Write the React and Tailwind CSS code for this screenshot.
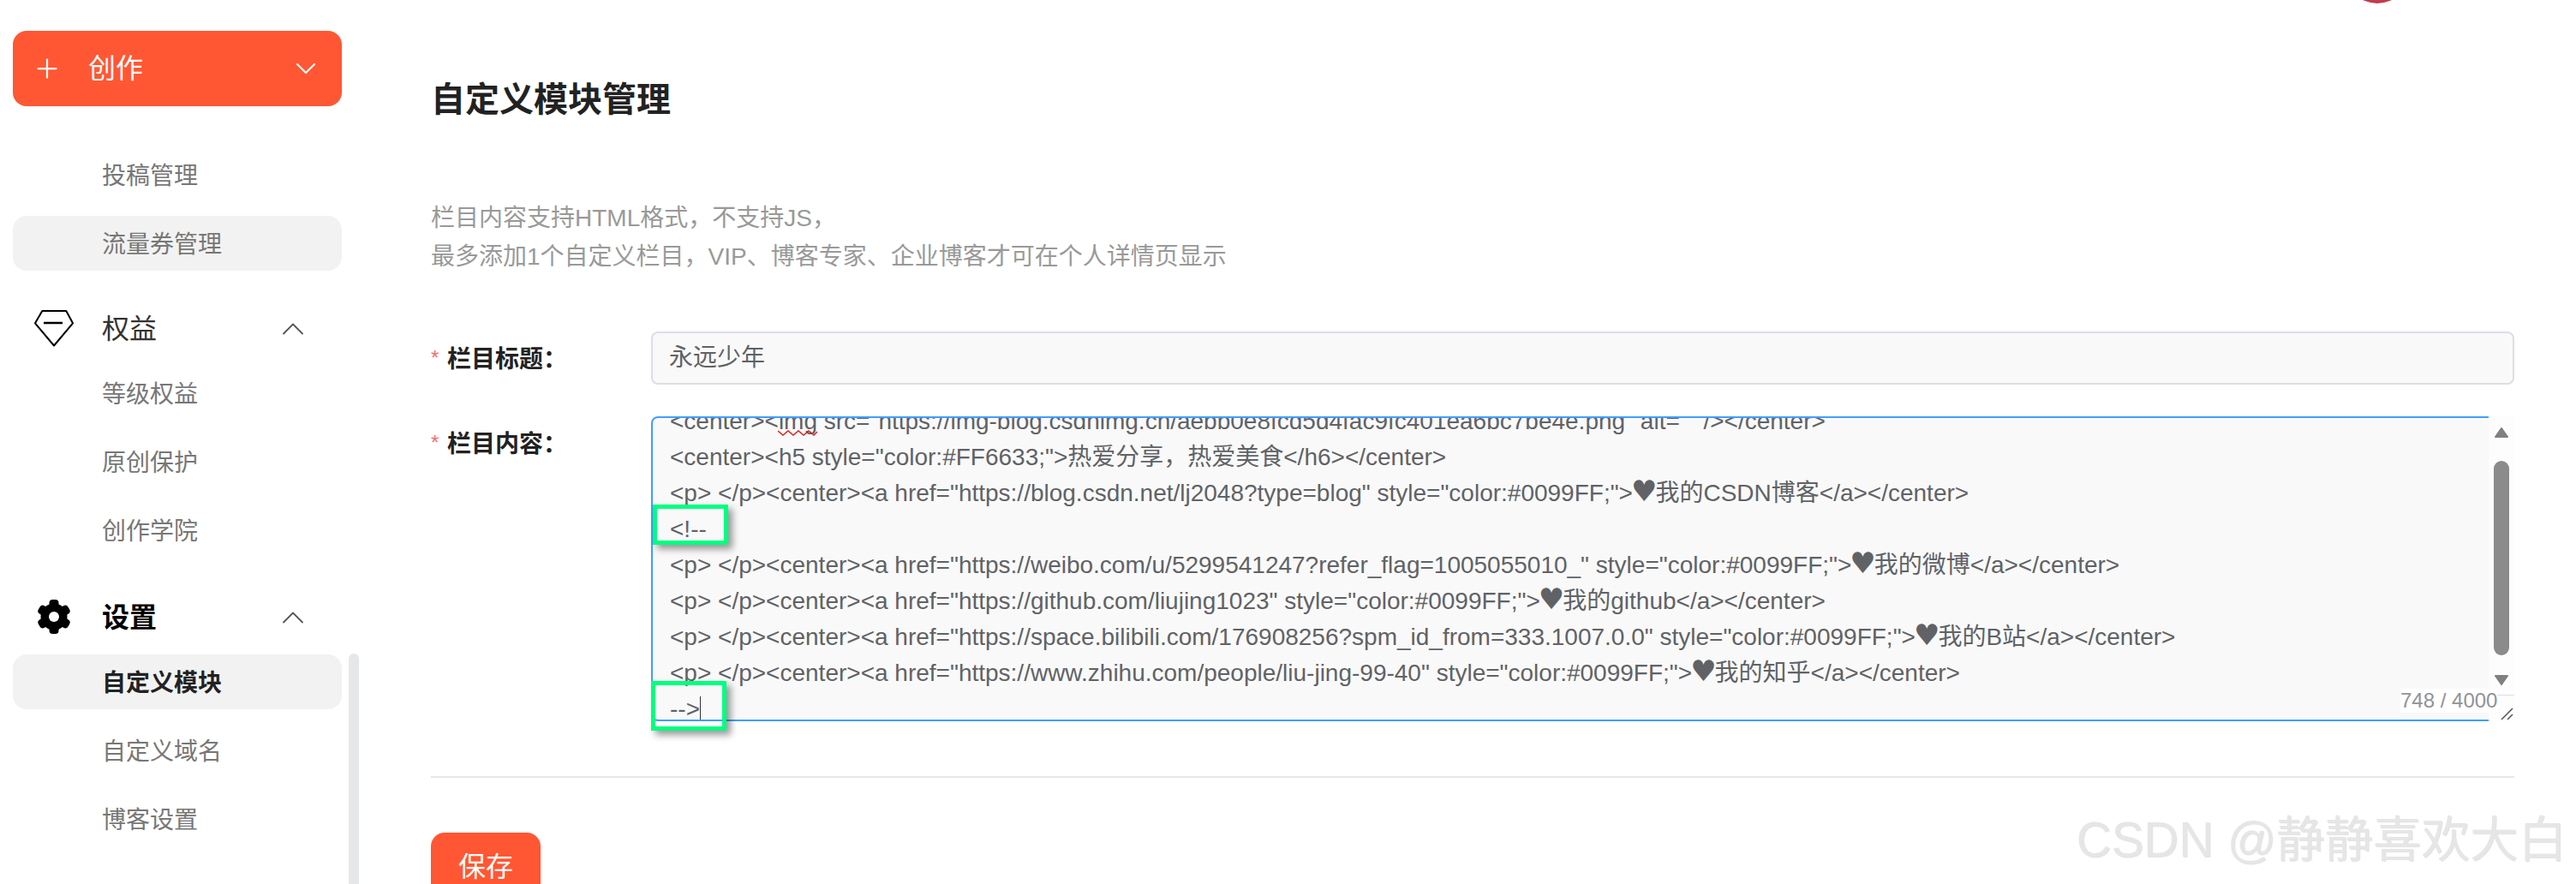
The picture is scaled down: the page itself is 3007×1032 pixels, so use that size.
import { ChevronDown, ChevronUp, Plus } from "lucide-react";

const font = "font-['Liberation_Sans','Noto_Sans_CJK_SC',sans-serif]";

const codeLines = [
  '<center><img src="https://img-blog.csdnimg.cn/aebb0e8fcd5d4fac9fc401ea6bc7be4e.png" alt="" /></center>',
  '<center><h5 style="color:#FF6633;">热爱分享，热爱美食</h6></center>',
  '<p> </p><center><a href="https://blog.csdn.net/lj2048?type=blog" style="color:#0099FF;">♥我的CSDN博客</a></center>',
  "<!--",
  '<p> </p><center><a href="https://weibo.com/u/5299541247?refer_flag=1005055010_" style="color:#0099FF;">♥我的微博</a></center>',
  '<p> </p><center><a href="https://github.com/liujing1023" style="color:#0099FF;">♥我的github</a></center>',
  '<p> </p><center><a href="https://space.bilibili.com/176908256?spm_id_from=333.1007.0.0" style="color:#0099FF;">♥我的B站</a></center>',
  '<p> </p><center><a href="https://www.zhihu.com/people/liu-jing-99-40" style="color:#0099FF;">♥我的知乎</a></center>',
];

function Diamond() {
  return (
    <svg width="46" height="43" viewBox="0 0 46 43" fill="none" stroke="#000" strokeWidth="2">
      <path d="M9.3 1H37.3L45 15.3 23 41.5 1 15.3Z" strokeLinejoin="round" />
      <path d="M11 15H33" strokeWidth="2.5" />
    </svg>
  );
}

function Gear() {
  return (
    <svg width="38" height="40" viewBox="0 0 38 40">
      <circle cx="19" cy="20" r="15.5" fill="#000" />
      {[0, 60, 120, 180, 240, 300].map((a) => (
        <rect key={a} x="13.5" y="0" width="11" height="10" rx="4" fill="#000" transform={`rotate(${a} 19 20)`} />
      ))}
      <circle cx="19" cy="20" r="6" fill="#fff" />
    </svg>
  );
}

function MenuItem({ label, active, bold }) {
  return (
    <div
      className={`h-16 rounded-2xl pl-[104px] pt-[3px] flex items-center text-[28px] ${active ? "bg-[#f2f2f2]" : ""} ${
        bold ? "font-bold text-[#222]" : "text-[#777]"
      }`}
    >
      {label}
    </div>
  );
}

function GroupHeader({ icon, label, bold }) {
  return (
    <div className="h-16 flex items-center relative pl-[104px]">
      <div className="absolute left-[25px] top-0 h-16 w-[46px] flex items-center justify-center">{icon}</div>
      <span className={`text-[32px] pt-[2px] ${bold ? "font-bold text-black" : "text-[#333]"}`}>{label}</span>
      <ChevronUp size={44} strokeWidth={1} className="text-[#555] ml-[137px] mt-[2px]" />
    </div>
  );
}

function Sidebar() {
  return (
    <aside className="w-[422px] shrink-0 relative h-full">
      <div className="w-[384px] ml-[15px] pt-9">
        <div className="h-[88px] rounded-2xl bg-[#ff5733] text-white flex items-center pl-[22px] pr-[22px]">
          <Plus size={36} strokeWidth={1.5} className="mr-[30px]" />
          <span className="text-[32px]">创作</span>
          <ChevronDown size={40} strokeWidth={1.3} className="ml-auto" />
        </div>

        <div className="mt-12 flex flex-col gap-4">
          <MenuItem label="投稿管理" />
          <MenuItem label="流量券管理" active />
        </div>

        <div className="mt-[35px]">
          <GroupHeader icon={<Diamond />} label="权益" />
        </div>
        <div className="mt-3 flex flex-col gap-4">
          <MenuItem label="等级权益" />
          <MenuItem label="原创保护" />
          <MenuItem label="创作学院" />
        </div>

        <div className="mt-[37px]">
          <GroupHeader icon={<Gear />} label="设置" bold />
        </div>
        <div className="mt-3 flex flex-col gap-4">
          <MenuItem label="自定义模块" active bold />
          <MenuItem label="自定义域名" />
          <MenuItem label="博客设置" />
        </div>
      </div>
      {/* sidebar scrollbar */}
      <div className="absolute left-[407px] top-[763px] bottom-0 w-3 rounded-t-md bg-[#e6e7e9]" />
    </aside>
  );
}

function FieldLabel({ children }) {
  return (
    <div className="w-[257px] shrink-0 h-[62px] pt-[3px] flex items-center text-[28px] font-bold text-[#222]">
      <span className="text-[#f56c6c] font-normal text-[24px] w-[19px] -mt-1">*</span>
      {children}
    </div>
  );
}

// the heart is drawn bigger than the rest of the line in the reference
function CodeLine({ text }) {
  const [before, after] = text.split("♥");
  if (after === undefined) return <div>{text}</div>;
  return (
    <div>
      {before}
      <span className="font-['DejaVu_Sans'] text-[34px] leading-none -mx-[2px]">♥</span>
      {after}
    </div>
  );
}

function CodeEditor() {
  return (
    <div className="relative flex-1 h-[356px]">
      <div className="h-full overflow-hidden rounded-l-lg border-2 border-[#409eff] bg-[#f9f9f9] text-[#606266] text-[28px] leading-[42px] pl-5 pr-8">
        <div className="-mt-[17px] whitespace-pre">
          {codeLines.map((line, i) => (
            <div key={i} className="h-[42px]">
              <CodeLine text={line} />
            </div>
          ))}
          <div className="flex items-center">
            --&gt;
            <span className="inline-block w-px h-[30px] bg-[#333]" />
          </div>
        </div>
      </div>

      {/* spell check squiggle */}
      <svg className="absolute left-[148px] top-4" width="46" height="7" viewBox="0 0 46 7" fill="none">
        <path d="M0 1L6 6 12 1 18 6 24 1 30 6 36 1 42 6 46 2" stroke="#e02020" strokeWidth="1.5" />
      </svg>

      {/* scrollbar */}
      <div className="absolute right-0 top-0 bottom-0 w-[30px] bg-[#fdfdfd] flex flex-col items-center">
        <svg className="mt-[13px]" width="16" height="12" viewBox="0 0 16 12">
          <path d="M8 1L15 11H1Z" fill="#808080" stroke="#808080" strokeWidth="2" strokeLinejoin="round" />
        </svg>
        <div className="mt-[27px] w-[18px] h-[227px] rounded-full bg-[#8b8b8b]" />
        <svg className="mt-[23px]" width="16" height="12" viewBox="0 0 16 12">
          <path d="M1 1H15L8 11Z" fill="#808080" stroke="#808080" strokeWidth="2" strokeLinejoin="round" />
        </svg>
      </div>

      {/* counter */}
      <div className="absolute right-5 bottom-[10px] h-7 w-[113px] bg-white text-[24px] leading-7 text-[#909399] whitespace-nowrap">
        748 / 4000
      </div>
      <div className="absolute right-0 bottom-[30px] w-5 h-px bg-[#dcdfe6]" />

      {/* resize handle */}
      <svg className="absolute right-0 bottom-0" width="17" height="17" viewBox="0 0 17 17" stroke="#555" strokeWidth="1.5">
        <path d="M2 15L15 2M9 15L15 9" />
      </svg>

      {/* screenshot annotations */}
      <div className="absolute left-[2px] top-[103px] w-[88px] h-[47px] border-[5px] border-[#00ff80] shadow-[5px_5px_8px_rgba(0,0,0,0.4)]" />
      <div className="absolute left-0 top-[309px] w-[88px] h-[58px] border-[5px] border-[#00ff80] shadow-[5px_5px_8px_rgba(0,0,0,0.4)]" />
    </div>
  );
}

export default function App() {
  return (
    <div className={`relative flex h-[1032px] w-[3007px] overflow-hidden bg-white ${font}`}>
      <Sidebar />

      <main className="flex-1 pl-[81px] pr-[72px]">
        <h1 className="mt-24 text-[40px] leading-10 font-bold text-[#222]">自定义模块管理</h1>

        <p className="mt-[96px] text-[28px] leading-[45px] text-[#999]">
          栏目内容支持HTML格式，不支持JS，
          <br />
          最多添加1个自定义栏目，VIP、博客专家、企业博客才可在个人详情页显示
        </p>

        <div className="mt-[65px] flex">
          <FieldLabel>栏目标题：</FieldLabel>
          <div className="flex-1 h-[62px] rounded-lg border-2 border-[#dcdfe6] bg-[#f9f9f9] pl-[19px] flex items-center text-[28px] text-[#606266]">
            永远少年
          </div>
        </div>

        <div className="mt-[37px] flex">
          <FieldLabel>栏目内容：</FieldLabel>
          <CodeEditor />
        </div>

        <div className="mt-16 h-0.5 bg-[#e8e8ed]" />

        <button className="mt-16 w-32 h-20 rounded-2xl bg-[#ff5733] text-white text-[32px]">保存</button>
      </main>

      {/* avatar edge, cut off by the top of the picture */}
      <div className="absolute left-[2737px] -top-[72px] w-[76px] h-[76px] rounded-full bg-[#c23b4d]" />

      {/* watermark */}
      <div className="absolute right-[11px] top-[949px] text-[56.5px] leading-[64px] text-[#e6e6e6] whitespace-nowrap [text-shadow:1px_1px_1px_rgba(0,0,0,0.12)]">
        CSDN @静静喜欢大白
      </div>
    </div>
  );
}
